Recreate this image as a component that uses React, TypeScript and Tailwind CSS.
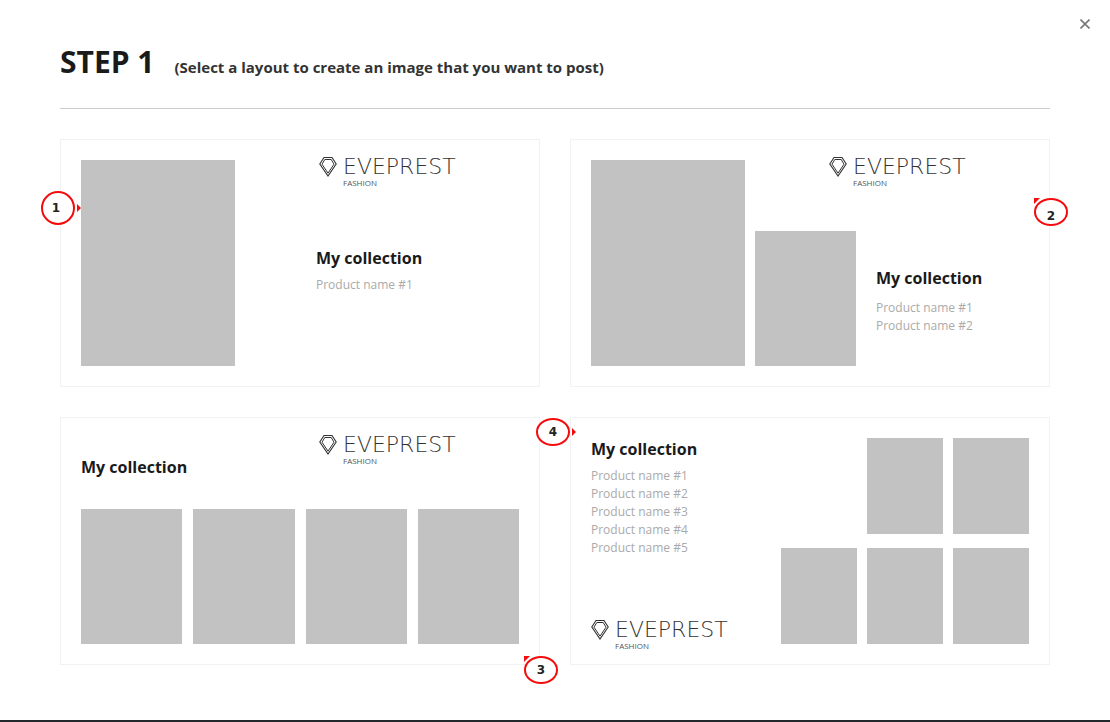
import { type ReactNode } from 'react';
import clsx from 'clsx';

type MarkerProps = {
  label: string;
  pointer: 'right' | 'corner';
  className: string;
};

// Numbered callout: an ellipse with a small pointer on its side or corner
function Marker({ label, pointer, className }: MarkerProps) {
  return (
    <span
      className={clsx(
        "pointer-events-none absolute z-10 flex w-[34px] items-center justify-center rounded-[50%] border-2 border-[#f40b0b] bg-white font-['DejaVu_Sans',sans-serif] text-xs font-bold text-[#222]",
        className,
      )}
    >
      {label}
      <svg
        viewBox="0 0 6 8"
        preserveAspectRatio="none"
        className={clsx(
          'absolute fill-[#f40b0b]',
          pointer === 'right' ? '-right-2 h-2 w-1' : '-top-0.5 -left-0.5 h-1.5 w-1.5',
        )}
      >
        <path d={pointer === 'right' ? 'M0 0L6 4L0 8z' : 'M0 0H6L0 8z'} />
      </svg>
    </span>
  );
}

function Logo({ className }: { className?: string }) {
  return (
    <span className={clsx('flex h-8 items-start gap-1.5 text-[#333]', className)}>
      <svg viewBox="0 0 18 21" className="h-[21px] w-[18px] shrink-0" fill="none" stroke="currentColor">
        <path d="M5 1.5H13L17.2 8L9 20L0.8 8z" strokeWidth="1.1" />
        <path d="M5.8 3.5H12.2L15 8.2L9 17.2L3 8.2z" strokeWidth="1" />
      </svg>
      <span className="flex flex-col">
        <span className="font-['DejaVu_Sans','DejaVu_Sans_Light',sans-serif] text-[22px] leading-[22px] font-extralight">EVEPREST</span>
        <span className="font-['Open_Sans',sans-serif] text-[8px] leading-[9px] text-[#555]">FASHION</span>
      </span>
    </span>
  );
}

function Title({ className }: { className?: string }) {
  return <span className={clsx('block text-base leading-6 font-bold text-[#1a1a1a]', className)}>My collection</span>;
}

function Products({ count, className }: { count: number; className?: string }) {
  return (
    <span className={clsx('block text-xs leading-[18px] text-[#aaa]', className)}>
      {Array.from({ length: count }, (_, i) => (
        <span key={i} className="block whitespace-nowrap">
          Product name #{i + 1}
        </span>
      ))}
    </span>
  );
}

function Picture({ className }: { className: string }) {
  return <span className={clsx('block shrink-0 bg-[#c2c2c2]', className)} />;
}

function LayoutCard({ name, marker, children }: { name: string; marker: ReactNode; children: ReactNode }) {
  return (
    <div className="relative">
      <button
        type="button"
        aria-label={name}
        className="flex min-h-[248px] w-full cursor-pointer border border-[#f2f2f2] bg-white p-5 text-left"
      >
        {children}
      </button>
      {marker}
    </div>
  );
}

export default function App() {
  return (
    <main className="relative min-h-screen border-b-2 border-[#23282d] bg-white px-[60px] pb-12 font-['Open_Sans',sans-serif]">
      <button type="button" aria-label="Close" className="absolute top-3 right-[13px] flex h-6 w-6 items-center justify-center text-[#777]">
        <svg viewBox="0 0 10 10" className="h-2.5 w-2.5" fill="none" stroke="currentColor" strokeWidth="1.6">
          <path d="M0.5 0.5L9.5 9.5M9.5 0.5L0.5 9.5" />
        </svg>
      </button>

      <header className="flex items-baseline gap-5 border-b border-[#ccc] pt-10 pb-6">
        <h1 className="text-[30px] leading-[44px] font-bold text-[#1a1a1a]">STEP 1</h1>
        <p className="text-[15px] font-bold text-[#333]">(Select a layout to create an image that you want to post)</p>
      </header>

      <div className="mt-[30px] grid grid-cols-2 gap-[30px]">
        <LayoutCard name="Layout 1" marker={<Marker label="1" pointer="right" className="top-[52px] -left-[19px] h-[34px] pr-1" />}>
          <Picture className="h-[206px] w-[154px]" />
          <span className="ml-[81px] flex flex-col">
            <Logo className="-mt-1 ml-[3px]" />
            <Title className="mt-[58px]" />
            <Products count={1} className="mt-1.5" />
          </span>
        </LayoutCard>

        <LayoutCard name="Layout 2" marker={<Marker label="2" pointer="corner" className="top-[59px] -right-[18px] h-7 pt-2" />}>
          <Picture className="h-[206px] w-[154px]" />
          <span className="ml-2.5 flex flex-col self-stretch">
            <Logo className="-mt-1 ml-[74px]" />
            <span className="mt-auto flex gap-5">
              <Picture className="h-[135px] w-[101px]" />
              <span className="pt-[35px]">
                <Title />
                <Products count={2} className="mt-[9px]" />
              </span>
            </span>
          </span>
        </LayoutCard>

        <LayoutCard name="Layout 3" marker={<Marker label="3" pointer="corner" className="-right-[18px] -bottom-[19px] h-7" />}>
          <span className="flex w-full flex-col justify-between">
            <span className="flex">
              <Title className="mt-[17px] flex-1" />
              <Logo className="-mt-1 w-[200px]" />
            </span>
            <span className="grid grid-cols-4 gap-[11px]">
              <Picture className="h-[135px]" />
              <Picture className="h-[135px]" />
              <Picture className="h-[135px]" />
              <Picture className="h-[135px]" />
            </span>
          </span>
        </LayoutCard>

        <LayoutCard name="Layout 4" marker={<Marker label="4" pointer="right" className="top-px -left-[34px] h-7" />}>
          <span className="flex flex-1 flex-col self-stretch">
            <Title className="-mt-px" />
            <Products count={5} className="mt-1.5" />
            <Logo className="mt-auto -mb-[7px]" />
          </span>
          <span className="grid grid-cols-3 gap-x-2.5 gap-y-3.5">
            <Picture className="col-start-2 h-24 w-[76px]" />
            <Picture className="h-24 w-[76px]" />
            <Picture className="h-24 w-[76px]" />
            <Picture className="h-24 w-[76px]" />
            <Picture className="h-24 w-[76px]" />
          </span>
        </LayoutCard>
      </div>
    </main>
  );
}
